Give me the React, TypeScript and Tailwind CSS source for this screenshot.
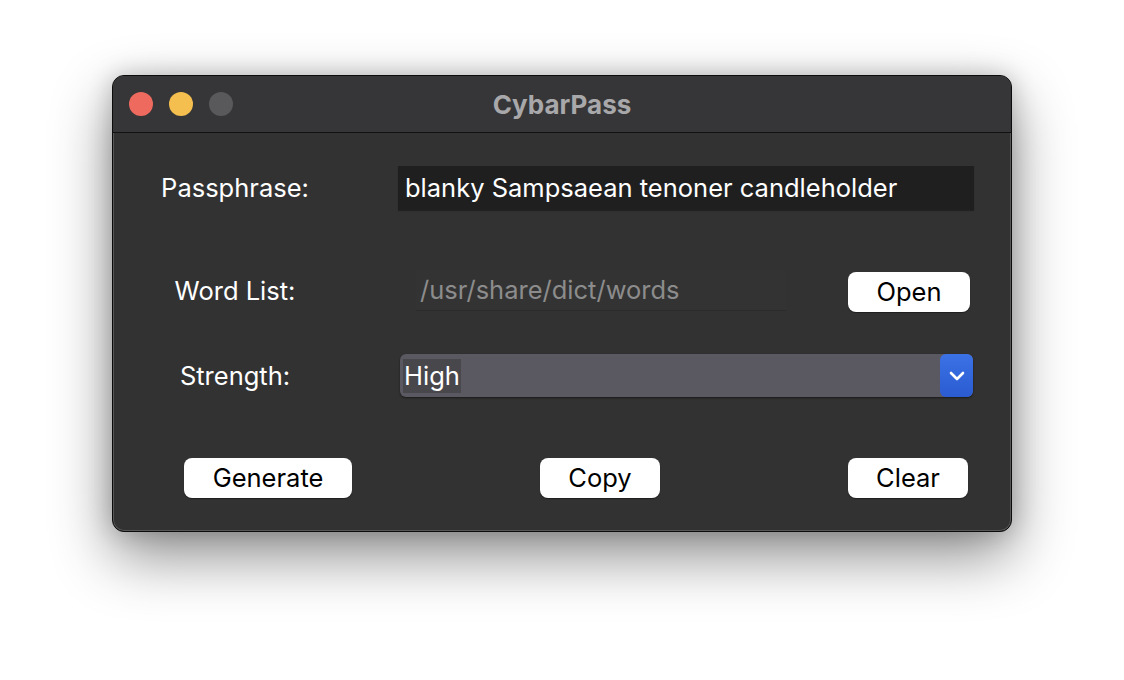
import React, { useState } from 'react';

const font = { fontFamily: 'Inter, "Noto Sans", sans-serif' };

const MacButton: React.FC<{ label: string; width: string }> = ({ label, width }) => (
  <button
    className={`${width} h-[40px] bg-white rounded-[8px] text-black text-[25.5px] leading-none flex items-center justify-center shadow-[0_1px_1px_rgba(0,0,0,0.4)]`}
  >
    {label}
  </button>
);

const App: React.FC = () => {
  const [phrase] = useState('blanky Sampsaean tenoner candleholder');
  const [wordList] = useState('/usr/share/dict/words');

  return (
    <div className="w-[1124px] h-[680px] bg-white pt-[75px] pl-[112px] overflow-hidden" style={font}>
      <div className="w-[900px] h-[457px] rounded-[12px] border border-[#0c0c0c] bg-[#323232] overflow-hidden shadow-[inset_0_0_0_1px_rgba(255,255,255,0.18),0_24px_60px_rgba(0,0,0,0.45),0_0_24px_rgba(0,0,0,0.2)] flex flex-col">
        {/* title bar */}
        <div className="h-[57px] bg-[#363638] border-b border-[#121212] flex items-center relative shrink-0">
          <div className="flex items-center gap-[16px] pl-[16px]">
            <span className="w-[24px] h-[24px] rounded-full bg-[#ee6a5f]" />
            <span className="w-[24px] h-[24px] rounded-full bg-[#f5bf4f]" />
            <span className="w-[24px] h-[24px] rounded-full bg-[#59595c]" />
          </div>
          <div className="absolute inset-0 flex items-center justify-center text-[26px] font-bold text-[#a8a8aa] pointer-events-none">
            CybarPass
          </div>
        </div>

        {/* content */}
        <div className="flex flex-col text-white text-[25.5px] leading-none">
          <div className="flex items-center mt-[33px] h-[44px]">
            <div className="w-[244px] text-center">Passphrase:</div>
            <div className="ml-[41px] w-[576px] h-[44px] bg-[#1f1f1f] flex items-center px-[7px] shadow-[0_1px_1px_rgba(0,0,0,0.3)]">
              {phrase}
            </div>
          </div>

          <div className="flex items-center mt-[60px] h-[41px]">
            <div className="w-[244px] text-center">Word List:</div>
            <div className="ml-[59px] w-[370px] h-[41px] bg-[#333333] border-b border-[#2b2b2b] flex items-center px-[4px] text-[#8c8c8c]">
              {wordList}
            </div>
            <div className="ml-[62px] mt-[2px]">
              <MacButton label="Open" width="w-[122px]" />
            </div>
          </div>

          <div className="flex items-center mt-[43px] h-[43px]">
            <div className="w-[244px] text-center">Strength:</div>
            <div className="ml-[43px] w-[573px] h-[43px] rounded-[6px] bg-[#5a5860] flex items-center pl-[3px] shadow-[0_1px_2px_rgba(0,0,0,0.5)]">
              <span className="bg-[#48474c] h-[34px] flex items-center px-[1px]">High</span>
              <div className="ml-auto w-[33px] h-[43px] rounded-[6px] bg-gradient-to-b from-[#3b72e6] to-[#2b5bd1] flex items-center justify-center">
                <svg width="16" height="10" viewBox="0 0 16 10" fill="none">
                  <path d="M2 2 L8 8 L14 2" stroke="white" strokeWidth="2.6" strokeLinecap="round" strokeLinejoin="round" />
                </svg>
              </div>
            </div>
          </div>

          <div className="flex items-center mt-[61px] h-[40px]">
            <div className="ml-[71px]">
              <MacButton label="Generate" width="w-[168px]" />
            </div>
            <div className="ml-[188px]">
              <MacButton label="Copy" width="w-[120px]" />
            </div>
            <div className="ml-[188px]">
              <MacButton label="Clear" width="w-[120px]" />
            </div>
          </div>
        </div>
      </div>
    </div>
  );
};

export default App;
